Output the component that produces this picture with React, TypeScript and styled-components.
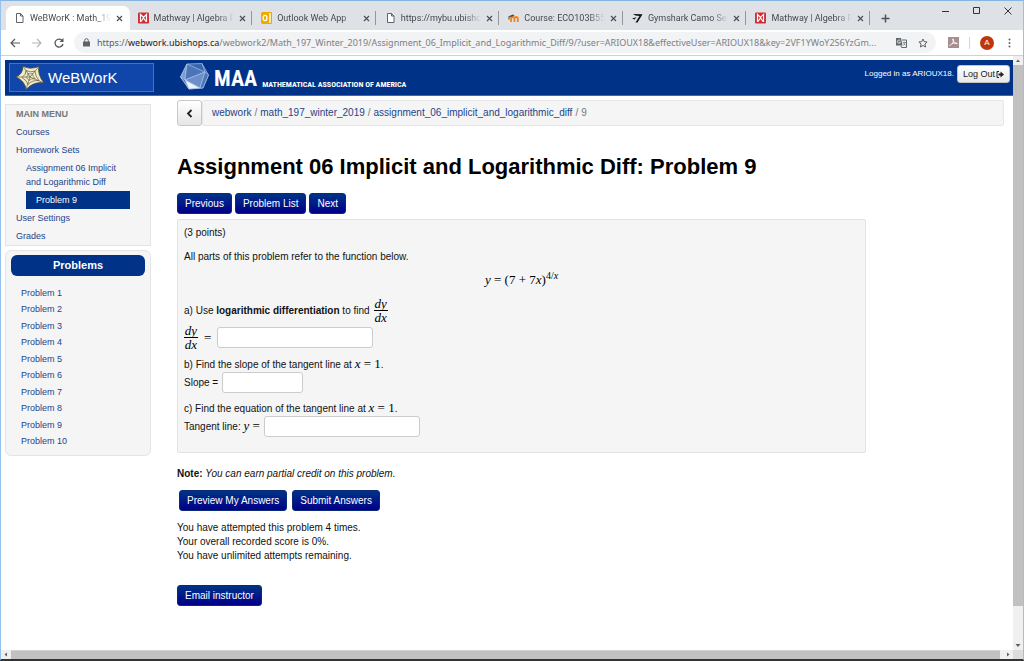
import React from "react";
import styled, { createGlobalStyle } from "styled-components";

const navy = "#003388";

const GlobalStyle = createGlobalStyle`
  * { box-sizing: border-box; }
  body {
    margin: 0;
    background: #ffffff;
    color: #111111;
    font-family: "Liberation Sans", Arial, sans-serif;
    font-size: 10px;
    line-height: 14px;
  }
  a { color: #1d4489; text-decoration: none; }
  button, input { font: inherit; margin: 0; }
  ul, p, h1, h2 { margin: 0; padding: 0; }
  ul { list-style: none; }
`;

const Window = styled.div`
  display: flex;
  flex-direction: column;
  min-height: 100vh;
  border: 1px solid #93c3ec;
  border-top-color: #84b4e2;
  border-bottom: 2px solid #333333;
`;

const TabBar = styled.div`
  display: flex;
  height: 29px;
  padding: 5px 0 0 5px;
  background: #dee1e6;
  font-family: Roboto, "Noto Sans", sans-serif;
`;

const Tabs = styled.div`
  display: flex;
  flex: 0 1 865px;
  min-width: 0;
`;

const Tab = styled.div<{ $active?: boolean; $divided?: boolean }>`
  display: flex;
  flex: 1 1 0;
  align-items: center;
  min-width: 0;
  gap: 5px;
  padding: 0 5px 0 8px;
  border-radius: 7px 7px 0 0;
  background: ${(p) => (p.$active ? "#ffffff" : "transparent")};
  color: #45494d;
  font-size: 9px;
  svg { flex: none; }
  &::after {
    content: "";
    width: 1px;
    height: 14px;
    margin-right: -4px;
    background: ${(p) => (p.$divided ? "#93969b" : "transparent")};
  }
`;

const TabTitle = styled.span`
  flex: 1;
  min-width: 0;
  white-space: nowrap;
  mask-image: linear-gradient(to right, #000 80%, transparent);
`;

const IconButton = styled.button`
  display: flex;
  align-items: center;
  justify-content: center;
  flex: none;
  padding: 0;
  border: 0;
  background: none;
  color: #4d5156;
`;

const NewTab = styled(IconButton)`
  width: 28px;
  height: 24px;
`;

const WindowControls = styled.div`
  display: flex;
  gap: 23px;
  height: 10px;
  margin: 0 11px 0 auto;
`;

const Toolbar = styled.div`
  display: flex;
  align-items: center;
  gap: 12px;
  height: 26px;
  padding: 0 12px 0 9px;
  border-bottom: 1px solid #cfd1d4;
`;

const Address = styled.div`
  display: flex;
  flex: 1;
  align-items: center;
  gap: 7px;
  min-width: 0;
  height: 21px;
  margin-left: -2px;
  padding: 0 8px 0 9px;
  border-radius: 11px;
  background: #f1f3f4;
`;

const Actions = styled.div`
  display: flex;
  align-items: center;
  gap: 11px;
`;

const Url = styled.div`
  flex: 1;
  min-width: 0;
  overflow: hidden;
  white-space: nowrap;
  color: #7d8084;
  font-family: "Noto Sans", "Open Sans", sans-serif;
  font-size: 9px;
  span { color: #5c6064; }
  b { color: #202124; font-weight: 400; }
`;

const Avatar = styled.div`
  display: flex;
  align-items: center;
  justify-content: center;
  width: 14px;
  height: 14px;
  margin-right: 2px;
  border-radius: 7px;
  background: #bf360c;
  color: #ffffff;
  font-size: 8px;
`;

const ToolbarRule = styled.div`
  width: 1px;
  height: 12px;
  margin: 0 -2px;
  background: #d4d6d9;
`;

const Viewport = styled.div`
  display: grid;
  flex: 1;
  grid-template-columns: minmax(0, 1fr) 10px;
  grid-template-rows: 1fr 9px;
`;

const Page = styled.div`
  padding: 4px 0 0 4px;
`;

const VerticalBar = styled.div`
  display: flex;
  flex-direction: column;
  align-items: center;
  background: #f0f0f0;
  svg { flex: none; }
`;

const VerticalThumb = styled.div`
  flex: 0 1 91%;
  width: 100%;
  margin-bottom: auto;
  background: #c1c1c1;
`;

const HorizontalBar = styled.div`
  display: flex;
  align-items: center;
  background: #f0f0f0;
  svg { flex: none; }
`;

const HorizontalThumb = styled.div`
  flex: 1;
  height: 9px;
  margin-right: 3px;
  border-top: 1px solid #d2d2d2;
  background: #c1c1c1;
`;

const Corner = styled.div`
  background: #dcdcdc;
`;

const Masthead = styled.header`
  display: flex;
  height: 36px;
  padding: 3px 3px 0 4px;
  border-bottom: 1px solid #4067b0;
  background: ${navy};
  color: #ffffff;
`;

const Brand = styled.a`
  display: flex;
  align-items: center;
  gap: 4px;
  width: 145px;
  height: 29px;
  padding-left: 6px;
  border: 1px solid #4672c4;
  background: #1046aa;
  color: #ffffff;
  font-size: 15px;
`;

const Maa = styled.div`
  display: flex;
  align-items: flex-start;
  gap: 5px;
  margin-left: 26px;
  font-family: "Roboto Condensed", "Liberation Sans Narrow", "Liberation Sans", sans-serif;
  font-weight: 700;
`;

const MaaName = styled.span`
  font-size: 22px;
  line-height: 32px;
`;

const MaaTitle = styled.span`
  padding-top: 15px;
  font-size: 8px;
  white-space: nowrap;
`;

const Session = styled.div`
  display: flex;
  align-items: center;
  gap: 3px;
  height: 18px;
  margin: 2px 0 0 auto;
  font-size: 8px;
`;

const LogOut = styled.button`
  display: flex;
  align-items: center;
  gap: 1px;
  height: 18px;
  padding: 0 5px;
  border: 1px solid #c4c4c4;
  border-radius: 3px;
  background: linear-gradient(#ffffff, #e8e8e8);
  color: #222222;
  font-size: 9px;
`;

const Body = styled.div`
  display: grid;
  grid-template-columns: 146px minmax(0, 1fr);
  column-gap: 26px;
  padding-right: 9px;
`;

const Sidebar = styled.aside`
  display: flex;
  flex-direction: column;
  gap: 4px;
  padding-top: 8px;
`;

const Menu = styled.nav`
  padding: 0 10px;
  border: 1px solid #e4e4e4;
  background: #f5f5f5;
`;

const MenuHeading = styled.h2`
  color: #777777;
  font-size: 9px;
  line-height: 18px;
`;

const MenuItem = styled.li<{ $level?: number; $current?: boolean }>`
  margin: 0 ${(p) => (p.$level ? 10 : 0)}px;
  padding: ${(p) => (p.$current ? "2px 10px" : "2px 0")};
  background: ${(p) => (p.$current ? navy : "transparent")};
  font-size: 9px;
  a { color: ${(p) => (p.$current ? "#ffffff" : "#1d4489")}; }
`;

const Problems = styled.nav`
  padding: 4px 5px 7px;
  border: 1px solid #e4e4e4;
  border-radius: 6px;
  background: #f5f5f5;
`;

const ProblemsHeading = styled.h2`
  border-radius: 6px;
  background: ${navy};
  color: #ffffff;
  font-size: 11px;
  line-height: 21px;
  text-align: center;
`;

const ProblemList = styled.ul`
  display: flex;
  flex-direction: column;
  justify-content: space-between;
  min-height: 162px;
  margin-top: 10px;
  padding-left: 10px;
  font-size: 9px;
`;

const Main = styled.main`
  padding-top: 4px;
`;

const CrumbRow = styled.div`
  display: flex;
  height: 26px;
`;

const BackButton = styled.button`
  display: flex;
  align-items: center;
  justify-content: center;
  width: 25px;
  padding: 0;
  border: 1px solid #c8c8c8;
  border-radius: 3px;
  background: linear-gradient(#ffffff, #e6e6e6);
`;

const Crumbs = styled.nav`
  display: flex;
  flex: 1;
  align-items: center;
  gap: 3px;
  padding: 0 9px;
  border: 1px solid #e6e6e6;
  border-radius: 2px;
  background: #f5f5f5;
  color: #777777;
`;

const Title = styled.h1`
  margin: 26px 0 11px;
  color: #000000;
  font-size: 22px;
  line-height: 30px;
`;

const ButtonRow = styled.div<{ $gap: number; $inset?: number }>`
  display: flex;
  gap: ${(p) => p.$gap}px;
  padding-left: ${(p) => p.$inset ?? 0}px;
`;

const PrimaryButton = styled.button`
  height: 21px;
  padding: 0 7px;
  border: 1px solid #0a2a78;
  border-radius: 3px;
  background: linear-gradient(#003388, #000088);
  color: #ffffff;
`;

const ProblemBox = styled.section`
  width: 83.33%;
  margin: 5px 0 14px;
  padding: 6px 6px 15px;
  border: 1px solid #e3e3e3;
  border-radius: 2px;
  background: #f5f5f5;
`;

const Line = styled.p<{ $before?: number; $gap?: number }>`
  display: flex;
  align-items: center;
  gap: ${(p) => p.$gap ?? 4}px;
  margin-top: ${(p) => p.$before ?? 0}px;
`;

const Formula = styled.div`
  margin: 10px 0 6px;
  text-align: center;
`;

const MathText = styled.span`
  color: #000000;
  font-family: "Liberation Serif", "Times New Roman", serif;
  font-size: 13px;
  line-height: 0;
  white-space: nowrap;
  sup { font-size: 10px; }
`;

const FractionBox = styled.span`
  display: inline-flex;
  flex-direction: column;
  align-items: center;
  width: 14px;
  color: #000000;
  font-family: "Liberation Serif", "Times New Roman", serif;
  font-size: 13px;
  line-height: 13px;
  font-style: italic;
  span:first-child { width: 14px; border-bottom: 1px solid #000000; text-align: center; }
`;

const Answer = styled.input<{ $short?: boolean }>`
  width: ${(p) => (p.$short ? 81 : 156)}px;
  height: 21px;
  padding: 0 4px;
  border: 1px solid #cccccc;
  border-radius: 3px;
  background: #ffffff;
`;

const Attempts = styled.div`
  margin: 10px 0 22px;
`;

const Note = styled.p`
  margin-bottom: 9px;
`;

const Fraction = () => (
  <FractionBox>
    <span>dy</span>
    <span>dx</span>
  </FractionBox>
);

const PageIcon = () => (
  <svg width="11" height="12" viewBox="0 0 11 12" fill="#fff" stroke="#5f6368">
    <path d="M2.5 1.5h4l2.5 2.5v6.5h-6.5z M6.5 1.5v2.5h2.5" />
  </svg>
);

const MathwayIcon = () => (
  <svg width="11" height="12" viewBox="0 0 11 12">
    <rect y="0.5" width="11" height="11" rx="1" fill="#cf2e35" />
    <path d="M2.5 10V2.500l3 3 3-3V10M3 9.500l2.500-3.500L8 9.500" fill="none" stroke="#fff" strokeWidth="1.200" />
  </svg>
);

const OutlookIcon = () => (
  <svg width="11" height="12" viewBox="0 0 11 12">
    <path d="M1 .5h9.500v11H1z" fill="#ffe9a8" stroke="#eda600" />
    <path d="M0 1l8-1v12l-8-1z" fill="#f0ab00" />
    <ellipse cx="4" cy="6" rx="1.900" ry="2.600" fill="none" stroke="#fff" strokeWidth="1.300" />
  </svg>
);

const MoodleIcon = () => (
  <svg width="11" height="12" viewBox="0 0 11 12" fill="none">
    <path d="M3 10V6.500q0-1.500 1.700-1.500T6.400 6.500V10M6.400 6.500q0-1.500 1.700-1.500t1.700 1.500V10" stroke="#f98012" strokeWidth="1.800" />
    <path d="M0 4.500L5 2.500 6.500 3.500 3 5z" fill="#444" />
    <path d="M1 4.500v3" stroke="#444" />
  </svg>
);

const GymsharkIcon = () => (
  <svg width="11" height="12" viewBox="0 0 11 12" fill="#111">
    <path d="M1 2l9.500.3L5.500 10.500H3.500L7.500 4 3.500 3.500z M0 6.500l4.500-1.300L2.500 7.500z" />
  </svg>
);

const CloseIcon = () => (
  <svg width="7" height="7" viewBox="0 0 7 7" stroke="currentColor" strokeWidth="1.200">
    <path d="M1 1l5 5M6 1l-5 5" />
  </svg>
);

const Arrow = ({ back }: { back?: boolean }) => (
  <svg width="10" height="10" viewBox="0 0 10 10" fill="none" stroke={back ? "#55595d" : "#b4b6b9"} strokeWidth="1.200">
    <path d={back ? "M10 5H1M5 1L1 5l4 4" : "M0 5h9M5 1l4 4-4 4"} />
  </svg>
);

const ReloadIcon = () => (
  <svg width="10" height="10" viewBox="0 0 10 10" fill="none" stroke="#55595d" strokeWidth="1.300">
    <path d="M8.400 2.800A4 4 0 1 0 9 6" />
    <path d="M9.500 0v4H5.500z" fill="#55595d" stroke="none" />
  </svg>
);

const LockIcon = () => (
  <svg width="7" height="9" viewBox="0 0 7 9">
    <rect y="3.500" width="7" height="5" rx="0.500" fill="#5f6368" />
    <path d="M1.700 4V2.500a1.800 1.800 0 0 1 3.600 0V4" fill="none" stroke="#5f6368" />
  </svg>
);

const TranslateIcon = () => (
  <svg width="11" height="10" viewBox="0 0 11 10" fill="none" stroke="#63676b">
    <path d="M0 0h5l1.500 7.500H0z" fill="#63676b" stroke="none" />
    <path d="M6 2h4.500v7.500H5.500L5 8" />
    <path d="M4.300 2.700a1.600 1.600 0 1 0 .2 1.500H3.200" stroke="#fff" strokeWidth="0.800" />
    <path d="M6.700 4.500h3M8.200 3.800v.7M9.200 4.500q-.5 2-2 3M7.300 5.500l2 2" strokeWidth="0.700" />
  </svg>
);

const StarIcon = () => (
  <svg width="10" height="10" viewBox="0 0 10 10" fill="none" stroke="#5f6368">
    <path d="M5 1l1.200 2.700 2.900.3L6.900 6l.7 3L5 7.500 2.400 9l.7-3L.900 4l2.900-.3z" />
  </svg>
);

const AcrobatIcon = () => (
  <svg width="11" height="11" viewBox="0 0 11 11" fill="none">
    <rect width="11" height="11" fill="#a88f8f" />
    <path d="M1.500 9q.5-1.500 3-2.500 1.500-3 .8-4.500-.8-.5-.6.800.8 3 4.300 4.200.8-.6-.5-.9-2-.2-4 .4" stroke="#ffffff" strokeWidth="0.900" />
  </svg>
);

const DotsIcon = () => (
  <svg width="3" height="10" viewBox="0 0 3 10" fill="#5f6368">
    <circle cx="1.500" cy="1.500" r="1" />
    <circle cx="1.500" cy="5" r="1" />
    <circle cx="1.500" cy="8.500" r="1" />
  </svg>
);

const WebIcon = () => (
  <svg width="28" height="25" viewBox="0 0 28 25" fill="none">
    <path d="M7 1Q13 5 23 1.500 21 9 28 18 18 16 10 24.500 9 16 0 12 7 9 7 1z" fill="#f1ebc6" stroke="#4b4936" strokeWidth="0.800" />
    <path d="M7 1l7 11 9-10.500M14 12l14 6M14 12l-4 12.500M14 12H0" stroke="#4b4936" strokeWidth="0.600" />
    <path d="M10 5.500q4 2.500 9 .5 0 5 4 9.500-7-.5-11 4-1-4-6-7Q10 10 10 5.500z" stroke="#5b583e" strokeWidth="0.700" />
    <path d="M12 8.500q2 1 4.500 0 0 3 2.500 5-4 0-6 2-1-2-3-3Q12 11 12 8.500z" stroke="#5b583e" strokeWidth="0.600" />
  </svg>
);

const Icosahedron = () => (
  <svg width="29" height="28" viewBox="0 0 29 28" fill="none" stroke="#a9c1e8" strokeWidth="0.700" strokeLinejoin="round">
    <path d="M7 1L22 .5 28.500 12 23 25 9 26 .5 14z" fill="#3a64ae" />
    <path d="M7 1L.5 14 5 17z" fill="#7f9dd0" />
    <path d="M7 1l18 8L5 17z" fill="#4c74b9" />
    <path d="M25 9L5 17l15 8z" fill="#6c8fcb" />
    <path d="M25 9l3.500 3L23 25h-3z" fill="#4c74b9" />
    <path d="M22 .5L25 9M.5 14L9 26" />
    <path d="M5 17l4 9 11-1z" fill="#eef3fb" />
  </svg>
);

const ChevronIcon = () => (
  <svg width="7" height="9" viewBox="0 0 7 9" fill="none" stroke="#222" strokeWidth="1.800">
    <path d="M5.500 1L2 4.500 5.500 8" />
  </svg>
);

const SignOutIcon = () => (
  <svg width="8" height="7" viewBox="0 0 8 7" fill="#222">
    <path d="M3 .5H1v6h2" fill="none" stroke="#222" />
    <path d="M2.500 2.500h2V.5l3.500 3-3.500 3v-2h-2z" />
  </svg>
);

const ScrollArrow = ({ d }: { d: string }) => (
  <svg width="10" height="9" viewBox="0 0 10 9" fill="#606060">
    <path d={d} />
  </svg>
);

const tabs = [
  { title: "WeBWorK : Math_197", icon: <PageIcon /> },
  { title: "Mathway | Algebra Pr", icon: <MathwayIcon /> },
  { title: "Outlook Web App", icon: <OutlookIcon /> },
  { title: "https://mybu.ubishop", icon: <PageIcon /> },
  { title: "Course: ECO103B55 2", icon: <MoodleIcon /> },
  { title: "Gymshark Camo Sear", icon: <GymsharkIcon /> },
  { title: "Mathway | Algebra Pr", icon: <MathwayIcon /> },
];

const problemNumbers = [1, 2, 3, 4, 5, 6, 7, 8, 9, 10];

export default function App() {
  return (
    <Window>
      <GlobalStyle />
      <TabBar>
        <Tabs>
          {tabs.map((tab, i) => (
            <Tab key={i} $active={i === 0} $divided={i > 0}>
              {tab.icon}
              <TabTitle>{tab.title}</TabTitle>
              <IconButton aria-label="Close tab"><CloseIcon /></IconButton>
            </Tab>
          ))}
        </Tabs>
        <NewTab aria-label="New tab">
          <svg width="9" height="9" viewBox="0 0 9 9" stroke="currentColor" strokeWidth="1.500"><path d="M4.500 0.500v8M.5 4.500h8" /></svg>
        </NewTab>
        <WindowControls>
          <IconButton aria-label="Minimize"><svg width="8" height="8" viewBox="0 0 8 8" stroke="#333"><path d="M0 4.500h7" /></svg></IconButton>
          <IconButton aria-label="Maximize"><svg width="8" height="8" viewBox="0 0 8 8" fill="none" stroke="#333"><path d="M.5 .5h6v6h-6z" /></svg></IconButton>
          <IconButton aria-label="Close"><svg width="8" height="8" viewBox="0 0 8 8" stroke="#333"><path d="M.5 .5l7 7M7.500 .5l-7 7" /></svg></IconButton>
        </WindowControls>
      </TabBar>
      <Toolbar>
        <IconButton aria-label="Back"><Arrow back /></IconButton>
        <IconButton aria-label="Forward"><Arrow /></IconButton>
        <IconButton aria-label="Reload"><ReloadIcon /></IconButton>
        <Address>
          <LockIcon />
          <Url>
            <span>https://</span><b>webwork.ubishops.ca</b>/webwork2/Math_197_Winter_2019/Assignment_06_Implicit_and_Logarithmic_Diff/9/?user=ARIOUX18&amp;effectiveUser=ARIOUX18&amp;key=2VF1YWoY2S6YzGm...
          </Url>
          <Actions>
            <IconButton aria-label="Translate"><TranslateIcon /></IconButton>
            <IconButton aria-label="Bookmark"><StarIcon /></IconButton>
          </Actions>
        </Address>
        <AcrobatIcon />
        <ToolbarRule />
        <Avatar>A</Avatar>
        <IconButton aria-label="Browser menu"><DotsIcon /></IconButton>
      </Toolbar>
      <Viewport>
        <Page>
          <Masthead>
            <Brand href="#"><WebIcon />WeBWorK</Brand>
            <Maa>
              <Icosahedron />
              <MaaName>MAA</MaaName>
              <MaaTitle>MATHEMATICAL ASSOCIATION OF AMERICA</MaaTitle>
            </Maa>
            <Session>
              Logged in as ARIOUX18.
              <LogOut>Log Out <SignOutIcon /></LogOut>
            </Session>
          </Masthead>
          <Body>
            <Sidebar>
              <Menu>
                <MenuHeading>MAIN MENU</MenuHeading>
                <ul>
                  <MenuItem><a href="#">Courses</a></MenuItem>
                  <MenuItem><a href="#">Homework Sets</a></MenuItem>
                  <MenuItem $level={1}><a href="#">Assignment 06 Implicit and Logarithmic Diff</a></MenuItem>
                  <MenuItem $level={1} $current><a href="#">Problem 9</a></MenuItem>
                  <MenuItem><a href="#">User Settings</a></MenuItem>
                  <MenuItem><a href="#">Grades</a></MenuItem>
                </ul>
              </Menu>
              <Problems>
                <ProblemsHeading>Problems</ProblemsHeading>
                <ProblemList>
                  {problemNumbers.map((n) => (
                    <li key={n}><a href="#">Problem {n}</a></li>
                  ))}
                </ProblemList>
              </Problems>
            </Sidebar>
            <Main>
              <CrumbRow>
                <BackButton aria-label="Up one level"><ChevronIcon /></BackButton>
                <Crumbs>
                  <a href="#">webwork</a>/<a href="#">math_197_winter_2019</a>/
                  <a href="#">assignment_06_implicit_and_logarithmic_diff</a>/<span>9</span>
                </Crumbs>
              </CrumbRow>
              <Title>Assignment 06 Implicit and Logarithmic Diff: Problem 9</Title>
              <ButtonRow $gap={3}>
                <PrimaryButton>Previous</PrimaryButton>
                <PrimaryButton>Problem List</PrimaryButton>
                <PrimaryButton>Next</PrimaryButton>
              </ButtonRow>
              <ProblemBox>
                <p>(3 points)</p>
                <Line $before={10}>All parts of this problem refer to the function below.</Line>
                <Formula>
                  <MathText><i>y</i> = (7 + 7<i>x</i>)<sup>4/<i>x</i></sup></MathText>
                </Formula>
                <Line $before={9}>
                  <span>a) Use <b>logarithmic differentiation</b> to find</span>
                  <Fraction />
                </Line>
                <Line as="label" $gap={6}>
                  <Fraction />
                  <MathText>=</MathText>
                  <Answer />
                </Line>
                <Line $before={7}>
                  <span>b) Find the slope of the tangent line at <MathText><i>x</i> = 1</MathText>.</span>
                </Line>
                <Line as="label">Slope = <Answer $short /></Line>
                <Line $before={9}>
                  <span>c) Find the equation of the tangent line at <MathText><i>x</i> = 1</MathText>.</span>
                </Line>
                <Line as="label">
                  <span>Tangent line: <MathText><i>y</i> =</MathText></span>
                  <Answer />
                </Line>
              </ProblemBox>
              <Note><b>Note:</b> <i>You can earn partial credit on this problem.</i></Note>
              <ButtonRow $gap={5} $inset={2}>
                <PrimaryButton>Preview My Answers</PrimaryButton>
                <PrimaryButton>Submit Answers</PrimaryButton>
              </ButtonRow>
              <Attempts>
                <p>You have attempted this problem 4 times.</p>
                <p>Your overall recorded score is 0%.</p>
                <p>You have unlimited attempts remaining.</p>
              </Attempts>
              <PrimaryButton>Email instructor</PrimaryButton>
            </Main>
          </Body>
        </Page>
        <VerticalBar>
          <ScrollArrow d="M3 6l2-2.500L7 6z" />
          <VerticalThumb />
          <ScrollArrow d="M2.500 3h5L5 6z" />
        </VerticalBar>
        <HorizontalBar>
          <ScrollArrow d="M6 2.500v4L3.500 4.500z" />
          <HorizontalThumb />
          <ScrollArrow d="M4 2.500v4l2.500-2z" />
        </HorizontalBar>
        <Corner />
      </Viewport>
    </Window>
  );
}
